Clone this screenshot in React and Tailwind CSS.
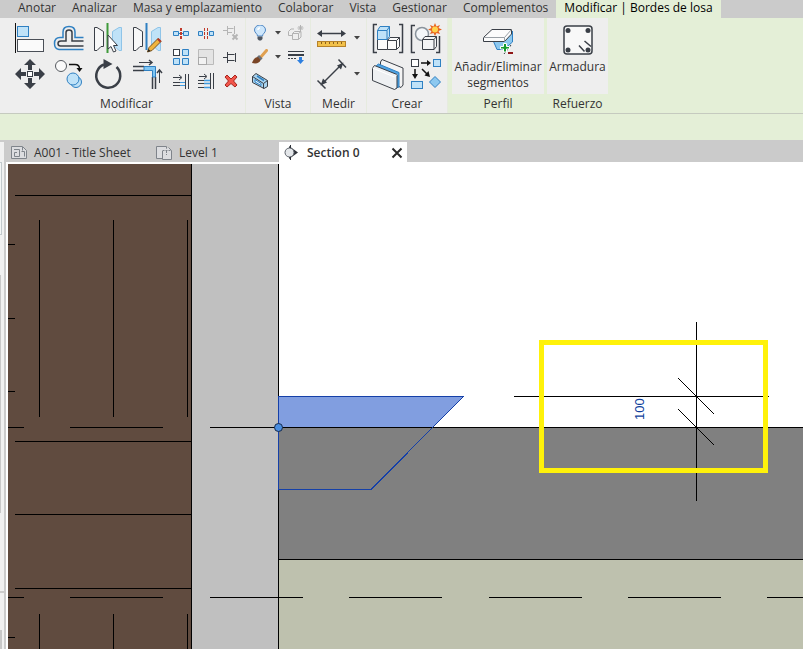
import React, { useState } from "react";

const DARK = "#3a3f47";
const BLUE = "#2f80c2";
const SKY = "#bfe2f8";

/* ---------- icons ---------- */

const Large = ({ children }) => (
  <svg width="32" height="32" viewBox="0 0 32 32" fill="none" className="block">{children}</svg>
);

const Small = ({ children }) => (
  <svg width="16" height="16" viewBox="0 0 16 16" fill="none" className="block">{children}</svg>
);

const AlignIcon = () => (
  <Large>
    <path d="M1.5 1V31" stroke="#111" />
    <rect x="3.5" y="4.5" width="11" height="10" fill={SKY} stroke={BLUE} />
    <rect x="3.5" y="17.5" width="26" height="12" fill="#fafafa" stroke="#4a4f57" />
  </Large>
);

const OffsetIcon = () => (
  <Large>
    <path d="M30.5 27.5H6Q1.5 27 1.5 21.5Q1.5 15.5 7 15.5H10V10Q10 4.5 16 4.5Q22 4.5 22 10V15.5H30.5" stroke={BLUE} strokeWidth="1.5" />
    <path d="M30.5 24H7.5Q5 24 5 21.5Q5 19 8 19H13V10.5Q13 8 16 8Q19 8 19 10.5V19H30.5" stroke={DARK} strokeWidth="1.5" />
  </Large>
);

const MirrorHalves = () => (
  <>
    <path d="M2.5 5.5H5L11.5 9.5V24.5H9L5 28.5H2.5Z" fill="#f8f8f8" stroke={DARK} />
    <path d="M29.5 5.5H27L20.5 9.5V24.5H23L27 28.5H29.5Z" fill={SKY} stroke="#8fc4e8" />
  </>
);

const MirrorPickIcon = () => (
  <Large>
    <MirrorHalves />
    <path d="M15.5 1V31" stroke="#3f9a3a" strokeWidth="2" />
    <path d="M16 13V27L19 24.5L21.5 30L24 29L21.5 23.5H25.5Z" fill="#fff" stroke={DARK} />
  </Large>
);

const MirrorDrawIcon = () => (
  <Large>
    <MirrorHalves />
    <path d="M15.5 1V28" stroke={BLUE} strokeWidth="2" />
    <path d="M16.5 30L18 25.5L27 16.5L30 19.5L21 28.5Z" fill="#f0b43c" stroke="#7a5520" />
    <path d="M26 17.5L27.5 16L30.5 19L29 20.5Z" fill="#b5382a" />
    <path d="M16.5 30L17.5 27L19.5 29Z" fill="#222" />
  </Large>
);

const MoveIcon = () => (
  <Large>
    <path d="M16 1L22 7H18V12H14V7H10Z M16 31L22 25H18V20H14V25H10Z M1 16L7 10V14H12V18H7V22Z M31 16L25 10V14H20V18H25V22Z" fill={DARK} />
    <rect x="13.5" y="13.5" width="5" height="5" fill="#fff" stroke={DARK} />
  </Large>
);

const CopyIcon = () => (
  <Large>
    <circle cx="8" cy="8" r="5.5" fill="#fafafa" stroke="#55595f" />
    <path d="M16 6.5H22Q26.5 6.5 26.5 11" stroke="#111" strokeWidth="1.5" />
    <path d="M23.5 10H29.5L26.5 14Z" fill="#111" />
    <circle cx="23" cy="24" r="5.5" fill={SKY} stroke={BLUE} />
    <circle cx="20" cy="21" r="6" fill={SKY} stroke={BLUE} />
  </Large>
);

const RotateIcon = () => (
  <Large>
    <path d="M24.5 9A12 12 0 1 1 12 6.5" stroke={DARK} strokeWidth="2.5" />
    <path d="M11.5 1L20.5 6L11.5 11Z" fill={DARK} />
  </Large>
);

const TrimIcon = () => (
  <Large>
    <path d="M2 8.5H13M2 12.5H13M21.5 19V31M24.5 19V31" stroke={DARK} strokeWidth="1.5" />
    <path d="M13 8.5H24.5V19H21.5V12.5H13Z" fill="#7fc6f3" stroke={BLUE} />
    <path d="M8 4.5H20M28.5 25V13" stroke={DARK} />
    <path d="M18 2L21 4.5L18 7M26 15L28.5 12L31 15" stroke={DARK} strokeWidth="1.5" />
  </Large>
);

const SplitIcon = () => (
  <Small>
    <path d="M0.5 6.5H5.5V10.5H0.5ZM10.5 6.5H15.5V10.5H10.5Z" fill={SKY} stroke={BLUE} />
    <path d="M5.5 8.5H7M9 8.5H10.5" stroke={BLUE} />
    <path d="M8 3V14" stroke="#c0392b" strokeWidth="2" strokeDasharray="3 1" />
  </Small>
);

const SplitGapIcon = () => (
  <Small>
    <path d="M0.5 6.5H4.5V10.5H0.5ZM11.5 6.5H15.5V10.5H11.5Z" fill={SKY} stroke={BLUE} />
    <path d="M6.5 3V14M9.5 3V14" stroke="#c0392b" strokeDasharray="3 1" />
  </Small>
);

const UnpinIcon = () => (
  <Small>
    <path d="M0 5.5H4M4.5 1V10M4.5 3.5H10.5M4.5 7.5H9M11.5 1V9" stroke="#b5b5b5" />
    <path d="M9.5 9.5L14.5 14.5M14.5 9.5L9.5 14.5" stroke="#b5b5b5" strokeWidth="2" />
  </Small>
);

const PinIcon = () => (
  <Small>
    <path d="M0 8.5H4M4.5 3V14M4.5 5.5H11.5M4.5 11.5H11.5M12.5 4V13" stroke={DARK} />
  </Small>
);

const ArrayIcon = () => (
  <Small>
    <rect x="0.5" y="0.5" width="6" height="6" fill="#fff" stroke={DARK} />
    <path d="M9.5 0.5H15.5V6.5H9.5ZM0.5 9.5H6.5V15.5H0.5ZM9.5 9.5H15.5V15.5H9.5Z" fill={SKY} stroke={BLUE} />
  </Small>
);

const ScaleIcon = () => (
  <Small>
    <path d="M0.5 0.5H15.5V15.5H8.5V8.5H0.5Z" fill="#e4e4e4" stroke="#bababa" />
    <rect x="0.5" y="8.5" width="8" height="7" fill="#f2f2f2" stroke="#a9a9a9" />
  </Small>
);

const TrimSingleIcon = () => (
  <Small>
    <path d="M0 4.5H8M6 2L9 4.5L6 7M12.5 1V16M15.5 1V16" stroke={DARK} />
    <path d="M0 9.5H7M0 12.5H7" stroke={DARK} />
    <path d="M7 9.5H12M7 12.5H12" stroke="#3f9be0" />
  </Small>
);

const TrimMultipleIcon = () => (
  <Small>
    <path d="M1 3.5H8M6 1L9 3.5L6 6M12.5 0V16M15.5 0V16M0 7.5H6M0 10.5H6M0 14.5H6" stroke={DARK} />
    <path d="M6 7.5H12M6 10.5H12M6 14.5H12" stroke="#3f9be0" strokeWidth="1.5" />
  </Small>
);

const DeleteIcon = () => (
  <Small>
    <path d="M2 4L4 2L8 6L12 2L14 4L10.5 8L14 12L12 14L8 10.5L4 14L2 12L5.5 8Z" fill="#f2564b" stroke="#a8241c" />
  </Small>
);

const BulbIcon = () => (
  <Small>
    <path d="M5.5 11C5.5 8.5 2.5 8 2.5 5A5.5 5 0 0 1 13.5 5C13.5 8 10.5 8.5 10.5 11Z" fill="#cde6fb" stroke="#4f87c4" />
    <path d="M5.5 11.5H10.5V14L9 15.5H7L5.5 14Z" fill="#4d5560" />
    <path d="M6 5Q6 3 8 3" stroke="#fff" strokeWidth="1.5" />
  </Small>
);

const BrushIcon = () => (
  <Small>
    <path d="M8 9L14.5 1.5" stroke="#e0a050" strokeWidth="3" strokeLinecap="round" />
    <path d="M6 7L9.5 10.5" stroke="#6b7078" strokeWidth="3" />
    <path d="M0 14Q2 8 6 8L8.5 11Q7 15.5 0 14Z" fill="#7a4526" />
  </Small>
);

const SectionBoxIcon = () => (
  <Small>
    <path d="M0.5 3.5L4 0.5L15.5 7.5V13.5L12 15.5L0.5 9.5Z" fill="#a9d4f0" stroke={DARK} />
    <path d="M0.5 3.5L11.5 10.5L15.5 7.5M11.5 10.5V15.5" stroke={DARK} />
    <path d="M3 6.5L9 10.5V12.5L3 9Z" fill="#dff1fc" stroke={BLUE} />
    <path d="M5 3L12 7.5" stroke={BLUE} strokeWidth="1.5" />
  </Small>
);

const DisplaceIcon = () => (
  <Small>
    <path d="M0.5 10.5V6.5L3 4H6M4.5 8.5H10.5V14.5H4.5ZM4.5 8.5L6.5 6.5H13L10.5 8.5M13 6.5V12L10.5 14.5M0.5 10.5H4" stroke="#b3b3b3" />
    <path d="M12.5 0V6M9.5 3H15.5M10.5 1L14.5 5M14.5 1L10.5 5" stroke="#b3b3b3" />
  </Small>
);

const LineworkIcon = () => (
  <Small>
    <path d="M0 2.5H16" stroke={DARK} />
    <path d="M0 6H16" stroke={DARK} strokeWidth="2" />
    <path d="M0 9.5H9" stroke={DARK} strokeDasharray="2 1" />
    <path d="M11 8H14V11H16L12.5 15L9 11H11Z" fill="#2d7fe0" />
  </Small>
);

const MeasureIcon = () => (
  <Large>
    <path d="M4 11.5H28" stroke={DARK} strokeWidth="1.5" />
    <path d="M2 11.5L7 8V15ZM31 11.5L26 8V15Z" fill={DARK} />
    <rect x="2.5" y="19.5" width="28" height="5" fill="#f2c14a" stroke="#b5822a" />
    <path d="M6.5 20V22M10.5 20V22M14.5 20V22M18.5 20V22M22.5 20V22M26.5 20V22" stroke="#8a5f1c" />
  </Large>
);

const DimensionIcon = () => (
  <Large>
    <path d="M7 26L27 6" stroke={DARK} strokeWidth="1.5" />
    <path d="M5.5 27.5L8 20.5L12 24.5ZM28.5 4.5L26 11.5L22 7.5Z" fill={DARK} />
    <path d="M2.5 22.5L10.5 30.5M23.5 1.5L31 9.5" stroke={DARK} strokeWidth="1.5" />
  </Large>
);

const GroupIcon = () => (
  <Large>
    <path d="M5 2.5H1.5V30.5H5M27 2.5H30.5V30.5H27" stroke={DARK} strokeWidth="1.5" />
    <path d="M5.5 17.5H15.5V27.5H5.5Z" fill="#fbfbfb" stroke={DARK} />
    <path d="M15.5 18.5L18 15.5H27.5V24.5L24.5 27.5H15.5Z" stroke={DARK} fill="#fbfbfb" />
    <path d="M15.5 18.5H24.5V27.5M24.5 18.5L27.5 15.5" stroke={DARK} />
    <path d="M5.5 8.5L8 4.5H17.5V14.5L15 17.5H5.5Z" fill={SKY} stroke={BLUE} />
    <path d="M5.5 8.5H15V17.5M15 8.5L17.5 4.5" stroke={BLUE} />
  </Large>
);

const AssemblyIcon = () => (
  <Large>
    <path d="M5 3.5H1.5V30.5H5M26 30.5H29.5V14" stroke={DARK} strokeWidth="1.5" />
    <circle cx="12" cy="12" r="6.5" fill="#f3f6f9" stroke="#8a939c" strokeWidth="1.5" />
    <path d="M12.5 17.5L15 14.5H26.5V24.5L24 27.5H12.5Z" fill="#f3f4f5" stroke={DARK} />
    <path d="M12.5 17.5H24V27.5M24 17.5L26.5 14.5" stroke={DARK} />
    <path d="M25 1L26.5 4.5L30 3L28.5 6L32 7.5L28.5 9L30 12L26.500 11L25 14L23.5 11L20 12L21.5 9L18 7.5L21.5 6L20 3L23.5 4.5Z" fill="#e9641f" />
    <circle cx="25" cy="7.5" r="3" fill="#ffd34d" />
  </Large>
);

const PartsIcon = () => (
  <Large>
    <path d="M8.5 4L10 1.5L31 10V27L29 29.5L8.5 20Z" fill="#f4f4f4" stroke={DARK} />
    <path d="M4.5 7.5L6.5 6L27 14.5V29L24 30L4.5 22Z" fill="#4fa3e3" stroke={BLUE} />
    <path d="M0.5 10L2.5 7.5L25 16.5V30L22.5 31.5L0.5 22.5Z" fill="#eef0f2" stroke={DARK} />
    <path d="M0.5 10L22.5 19L25 16.5" stroke="#fff" />
  </Large>
);

const SimilarIcon = () => (
  <Large>
    <rect x="1.5" y="1.5" width="7" height="7" fill="#fff" stroke={DARK} />
    <rect x="23.5" y="1.5" width="7" height="7" fill={SKY} stroke={BLUE} />
    <rect x="1.5" y="23.5" width="11" height="7" fill={SKY} stroke={BLUE} />
    <path d="M25 18.5L30.5 24L25 29.5L19.5 24Z" fill="#8cc8f0" stroke={BLUE} />
    <path d="M11 5H18M5 11V17M12 11L17 16" stroke="#111" strokeWidth="1.5" />
    <path d="M17 2L21 5L17 8ZM2 16H8L5 21ZM20 19L14.5 17.5L18.5 13Z" fill="#111" />
  </Large>
);

const SegmentsIcon = () => (
  <Large>
    <path d="M11.5 17.5L15 25.5H22L30.5 18V7L22 16Z" fill="#8cc8f0" stroke={BLUE} />
    <path d="M1.5 17.5V13.5L10 5.5H29.5V10L22.5 17.5Z" fill="#fcfcfc" stroke={DARK} />
    <path d="M1.5 13.5H22.5V17.5M22.5 13.5L29.5 5.5" stroke="#9aa0a6" />
    <path d="M22 30L29 21" stroke={DARK} />
    <path d="M21.5 19.5H24.500V22.5H27.5V25H24.500V28H21.5V25H18.5V22.5H21.5Z" fill="#149a2e" stroke="#fff" />
    <rect x="26" y="28" width="5" height="2" fill="#8f1616" />
  </Large>
);

const RebarIcon = () => (
  <Large>
    <rect x="2" y="2" width="28" height="28" rx="3" fill="#f8f8f8" stroke={DARK} strokeWidth="1.5" />
    <path d="M17 21.5L22.5 27.5M22.5 17L29 22.5" stroke={DARK} strokeWidth="1.5" />
    <circle cx="6" cy="6.5" r="2.5" fill={DARK} />
    <circle cx="26" cy="6.5" r="2.5" fill={DARK} />
    <circle cx="6" cy="26" r="2.5" fill={DARK} />
    <circle cx="26" cy="26" r="2.5" fill={DARK} />
  </Large>
);

const SheetIcon = () => (
  <Small>
    <path d="M0.5 1.5H11.5L15.5 5.5V13.5H0.5Z" fill="#dcdde0" stroke="#7f848b" />
    <path d="M3 4.5H8.5V11.5H3.5V7.5H6M10.5 6.5H13.5V11.5M11.5 2V5.5" stroke="#7f848b" />
  </Small>
);

const PlanIcon = () => (
  <Small>
    <path d="M10.5 5V1.5H0.5V13.5H6" fill="#dcdde0" stroke="#7f848b" />
    <path d="M6.5 6V14.5H15.5V5.5L12.5 2.5" fill="#dcdde0" stroke="#7f848b" />
    <path d="M6.5 5.5H15M10.5 6V10" stroke="#7f848b" strokeDasharray="2 1" />
  </Small>
);

const SectionIcon = () => (
  <Small>
    <path d="M5 1L14 7.5L5 14Z" fill="#2d3138" />
    <circle cx="5.5" cy="7.5" r="4.5" fill="#e4e7ea" stroke="#5c626a" />
    <path d="M6.5 0V3M6.5 12V15" stroke="#2d3138" />
  </Small>
);

/* ---------- ribbon ---------- */

const menus = ["Anotar", "Analizar", "Masa y emplazamiento", "Colaborar", "Vista", "Gestionar", "Complementos"];

const modifyLarge = [
  ["Alinear", AlignIcon], ["Desfase", OffsetIcon], ["Simetría - Seleccionar eje", MirrorPickIcon], ["Simetría - Dibujar eje", MirrorDrawIcon],
  ["Mover", MoveIcon], ["Copiar", CopyIcon], ["Rotar", RotateIcon], ["Recortar/Extender a esquina", TrimIcon],
];

const modifySmall = [
  ["Dividir elemento", SplitIcon], ["Dividir con separación", SplitGapIcon], ["Desbloquear", UnpinIcon],
  ["Matriz", ArrayIcon], ["Escala", ScaleIcon], ["Bloquear", PinIcon],
  ["Recortar/Extender un elemento", TrimSingleIcon], ["Recortar/Extender varios elementos", TrimMultipleIcon], ["Suprimir", DeleteIcon],
];

const createTools = [
  ["Crear grupo", GroupIcon], ["Crear montaje", AssemblyIcon], ["Crear piezas", PartsIcon], ["Crear similar", SimilarIcon],
];

function Tool({ name, icon: Icon }) {
  return <button type="button" aria-label={name} className="block"><Icon /></button>;
}

function More({ name }) {
  return (
    <button type="button" aria-label={name} className="flex w-3 items-center justify-center">
      <svg width="6" height="4" viewBox="0 0 6 4"><path d="M0 0H6L3 3.5Z" fill="#444" /></svg>
    </button>
  );
}

function Panel({ title, width, children }) {
  return (
    <section aria-label={title} className={`flex shrink-0 flex-col border-r border-[#e6ebdf] ${width}`}>
      <div className="flex h-[76px] justify-center pt-1">{children}</div>
      <h2 className="text-center leading-[19px]">{title}</h2>
    </section>
  );
}

function ContextPanel({ title, width, icon: Icon, children }) {
  return (
    <section aria-label={title} className={`flex shrink-0 flex-col ${width}`}>
      <button type="button" className="flex h-[76px] flex-col items-center bg-[#eeeeee] pt-[6px] leading-4 whitespace-nowrap">
        <Icon />
        <span className="pt-[3px]">{children}</span>
      </button>
      <h2 className="text-center leading-[19px]">{title}</h2>
    </section>
  );
}

function Ribbon() {
  return (
    <div className="flex overflow-hidden border-b border-[#c5cabf] bg-[#e4efd7]">
      <div className="flex shrink-0 bg-[#eeeeee] pl-2">
        <Panel title="Modificar" width="w-[238px]">
          <div className="flex gap-[10px]">
            <div className="grid grid-cols-4 content-start gap-x-[7px] gap-y-1">
              {modifyLarge.map(([name, icon]) => <Tool key={name} name={name} icon={icon} />)}
            </div>
            <div className="grid grid-cols-3 content-start gap-x-[9px] gap-y-2 pt-[3px]">
              {modifySmall.map(([name, icon]) => <Tool key={name} name={name} icon={icon} />)}
            </div>
          </div>
        </Panel>
        <Panel title="Vista" width="w-[65px]">
          <div className="grid grid-cols-[16px_12px_16px] content-start gap-x-1 gap-y-2 pt-[3px]">
            <Tool name="Ocultar en vista" icon={BulbIcon} />
            <More name="Más opciones de ocultar" />
            <Tool name="Desplazar elementos" icon={DisplaceIcon} />
            <Tool name="Modificar gráficos" icon={BrushIcon} />
            <More name="Más opciones de gráficos" />
            <Tool name="Estilo de línea" icon={LineworkIcon} />
            <Tool name="Cuadro de selección" icon={SectionBoxIcon} />
          </div>
        </Panel>
        <Panel title="Medir" width="w-[56px]">
          <div className="grid grid-cols-[32px_12px] content-start gap-x-1 gap-y-1">
            <Tool name="Medir distancia" icon={MeasureIcon} />
            <More name="Más opciones de medir" />
            <Tool name="Cota alineada" icon={DimensionIcon} />
            <More name="Más opciones de cota" />
          </div>
        </Panel>
        <Panel title="Crear" width="w-[81px]">
          <div className="grid grid-cols-2 content-start gap-x-[6px] gap-y-1">
            {createTools.map(([name, icon]) => <Tool key={name} name={name} icon={icon} />)}
          </div>
        </Panel>
      </div>
      <div className="flex gap-[3px] pl-1">
        <ContextPanel title="Perfil" width="w-[92px]" icon={SegmentsIcon}>Añadir/Eliminar<br />segmentos</ContextPanel>
        <ContextPanel title="Refuerzo" width="w-[61px]" icon={RebarIcon}>Armadura</ContextPanel>
      </div>
    </div>
  );
}

/* ---------- drawing area ---------- */

function SectionView() {
  return (
    <svg role="img" aria-label="Section 0" className="block min-h-[480px] w-full flex-1" shapeRendering="crispEdges">
      <rect width="100%" height="100%" fill="#fff" />
      <rect width="183" height="100%" fill="#604b3f" />
      <rect x="184" width="86" height="100%" fill="#c0c0c0" />
      <rect x="271" y="264" width="100%" height="131" fill="#808080" />
      <rect x="271" y="396" width="100%" height="100%" fill="#bec1ae" />

      {/* brick courses and dashed level lines */}
      <g fill="#000">
        <rect x="183" width="1" height="100%" />
        <rect x="270" width="1" height="100%" />
        <rect x="270" y="395" width="100%" height="1" />
        <rect x="202" y="263" width="100%" height="1" />
        {[31, 277, 350, 424].map(y => <rect key={y} x="7" y={y} width="176" height="1" />)}
        {[80, 154, 227, 473].map(y => <rect key={y} y={y} width="7" height="1" />)}
        {[31, 105, 179].map(x => (
          <g key={x}>
            <rect x={x} y="56" width="1" height="197" />
            <rect x={x} y="450" width="1" height="100%" />
          </g>
        ))}
        {[263, 433].map(y => (
          <g key={y}>
            <rect y={y} width="16" height="1" />
            <rect x="62" y={y} width="93" height="1" />
          </g>
        ))}
        {[202, 341, 481, 620, 759].map(x => <rect key={x} x={x} y="433" width="93" height="1" />)}
      </g>

      {/* slab edge profile */}
      <path d="M271 233H455L425 263H271Z" fill="#819ee0" />
      <path d="M270.5 232.5H455.5L363 325.5H270.5Z" fill="none" stroke="#1540a8" />
      <rect x="271" y="263" width="153" height="1" fill="#000" />
      <circle cx="270.5" cy="263.5" r="4" fill="#4a8ee0" stroke="#16294a" shapeRendering="auto" />

      {/* dimension */}
      <path d="M688.5 158V337M506 232.5H761M670 214L706 250M670 245L706 281" stroke="#000" />
      <text x="636" y="256" transform="rotate(-90 636 256)" fill="#0f3f9c" fontSize="13" fontFamily="'Liberation Sans', sans-serif">100</text>
      <rect x="533.5" y="178.5" width="224" height="128" fill="none" stroke="#fff20a" strokeWidth="5" />
    </svg>
  );
}

const docs = [
  { name: "A001 - Title Sheet", icon: SheetIcon, width: "w-[145px]" },
  { name: "Level 1", icon: PlanIcon, width: "w-32" },
  { name: "Section 0", icon: SectionIcon, width: "w-32" },
];

export default function App() {
  const [active, setActive] = useState("Section 0");

  return (
    <div className="flex min-h-screen flex-col bg-[#cbcbcb] font-['Open_Sans','Noto_Sans',sans-serif] text-[12px] text-[#333]">
      <nav className="flex h-[18px] overflow-hidden pl-[10px] leading-4 whitespace-nowrap">
        {menus.map(m => <a key={m} href="#" className="px-2">{m}</a>)}
        <a href="#" aria-current="page" className="bg-[#e4efd7] px-2 text-black">Modificar | Bordes de losa</a>
      </nav>

      <Ribbon />
      <div className="h-[26px] bg-[#e4efd7]" />

      <div className="flex flex-1">
        {/* edge of the docked palette */}
        <aside className="mt-[2px] w-1 shrink-0 bg-[#f1f1f1]">
          <div className="mt-5 h-[73px] w-[2px] border-y border-r border-[#c3cacd] bg-[#f5f7f7]" />
          <div className="mt-10 h-[238px] w-px bg-[#c8c8c8]" />
          <div className="mt-[78px] h-[2px] bg-[#cccccc]" />
          <div className="mt-[37px] h-5 w-[2px] bg-[#c8c8c8]" />
        </aside>

        <main className="ml-[2px] flex min-w-0 flex-1 flex-col">
          <div role="tablist" className="flex h-[22px] pt-[2px]">
            {docs.map(({ name, icon: Icon, width }) => (
              <div key={name} className={`flex items-center pt-[2px] pr-1 pl-[5px] ${width} ${active === name ? "bg-white font-semibold" : ""}`}>
                <button type="button" role="tab" aria-selected={active === name} onClick={() => setActive(name)} className="flex flex-1 items-center gap-[7px] whitespace-nowrap">
                  <Icon />
                  {name}
                </button>
                {active === name && (
                  <button type="button" aria-label={`Cerrar ${name}`}>
                    <svg width="12" height="12" viewBox="0 0 12 12"><path d="M1.5 1.5L10.5 10.5M10.5 1.5L1.5 10.5" stroke="#2b2b2b" strokeWidth="2" /></svg>
                  </button>
                )}
              </div>
            ))}
          </div>
          <div className="flex flex-1 flex-col border-t-2 border-l-2 border-white">
            <SectionView />
          </div>
        </main>
      </div>
    </div>
  );
}
